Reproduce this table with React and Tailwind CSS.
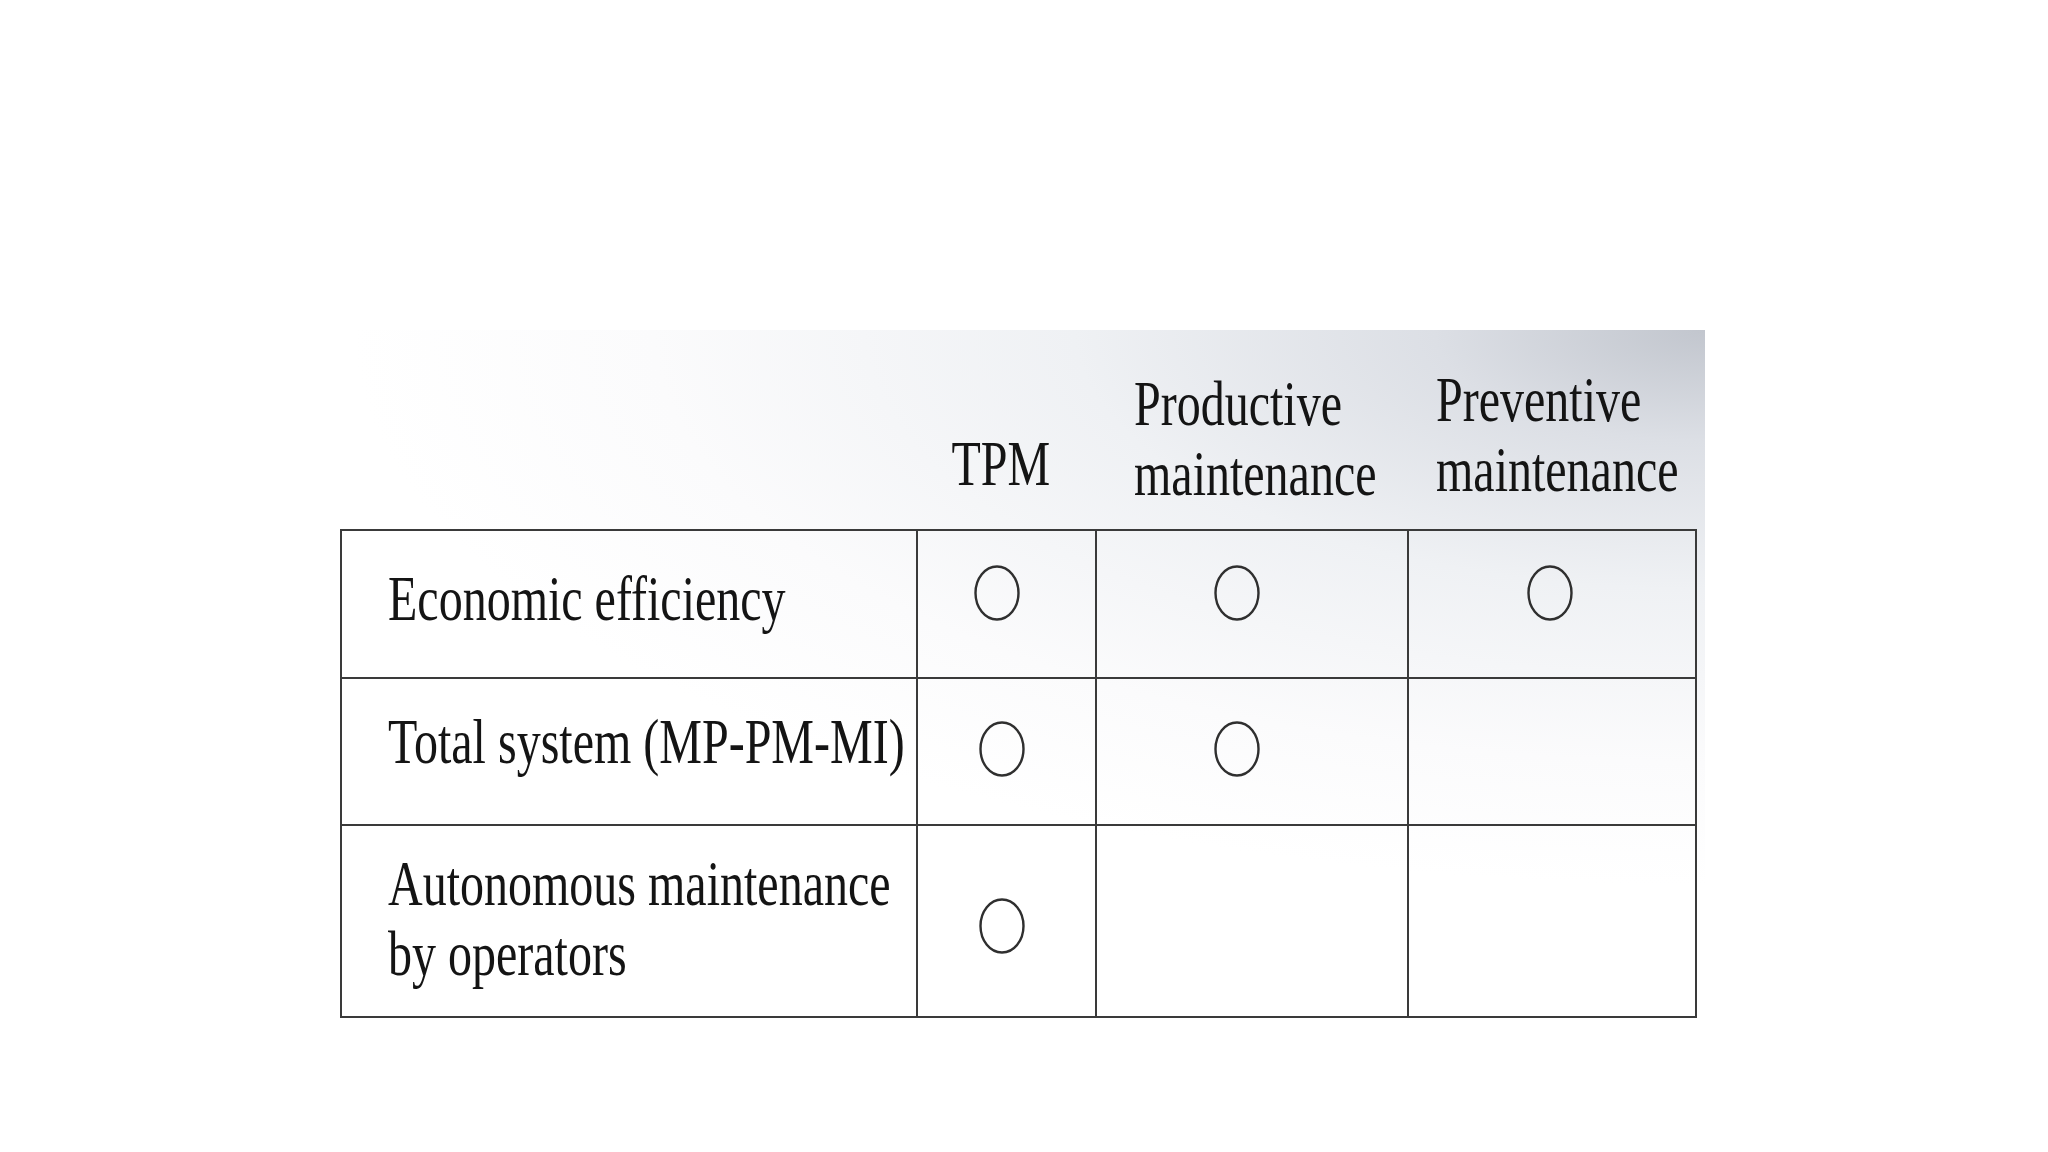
import React from 'react';

const serif = { fontFamily: '"Liberation Serif", "Times New Roman", serif' };

const Ring = () => (
  <svg width="48" height="58" viewBox="0 0 48 58">
    <ellipse cx="24" cy="29" rx="21.5" ry="26.5" fill="none" stroke="#2f2f2f" strokeWidth="2.4" />
  </svg>
);

const rows = [
  {
    label: ['Economic efficiency'],
    marks: [true, true, true],
    height: 'h-[148px]',
    textPad: 'pb-[10px]',
    ringPad: 'pb-[22px]',
    shift: ['pr-[20px]', 'pr-[30px]', 'pr-[4px]'],
  },
  {
    label: ['Total system (MP-PM-MI)'],
    marks: [true, true, false],
    height: 'h-[147px]',
    textPad: 'pb-[20px]',
    ringPad: 'pb-[6px]',
    shift: ['pr-[10px]', 'pr-[30px]', 'pr-[4px]'],
  },
  {
    label: ['Autonomous maintenance', 'by operators'],
    marks: [true, false, false],
    height: 'h-[192px]',
    textPad: 'pb-[4px]',
    ringPad: 'pt-[10px]',
    shift: ['pr-[10px]', 'pr-[30px]', 'pr-[4px]'],
  },
];

const App = () => {
  return (
    <div className="w-[2048px] h-[1152px] bg-white overflow-hidden text-[#141414]" style={serif}>
      <div className="pt-[330px] pl-[340px]">
        <div className="w-[1365px] h-[822px] bg-[radial-gradient(ellipse_110%_75%_at_100%_0%,#c2c6ce_0%,#dcdfe5_18%,#eff1f4_42%,#fbfbfc_70%,#ffffff_90%)]">
          {/* Header row */}
          <div className="grid grid-cols-[578px_179px_312px_288px] h-[199px] items-end text-[64px] leading-[70px]">
            <div />
            <div className="flex justify-center pb-[30px] pr-[14px]">
              <span className="inline-block scale-x-[0.75] whitespace-nowrap">TPM</span>
            </div>
            <div className="pb-[20px] pl-[37px]">
              <span className="inline-block scale-x-[0.75] origin-left whitespace-nowrap">
                Productive
                <br />
                maintenance
              </span>
            </div>
            <div className="pb-[24px] pl-[27px]">
              <span className="inline-block scale-x-[0.75] origin-left whitespace-nowrap">
                Preventive
                <br />
                maintenance
              </span>
            </div>
          </div>

          {/* Table body */}
          <div className="w-[1357px] border-l-[2.5px] border-t-[2.5px] border-[#3a3a3a] text-[64px] leading-[70px]">
            {rows.map((row, i) => (
              <div key={i} className={`grid grid-cols-[576px_179px_312px_288px] ${row.height}`}>
                <div className={`flex items-center pl-[46px] border-r-2 border-b-[2.5px] border-[#3a3a3a] ${row.textPad}`}>
                  <span className="inline-block scale-x-[0.75] origin-left whitespace-nowrap">
                    {row.label.map((line, j) => (
                      <React.Fragment key={j}>
                        {j > 0 && <br />}
                        {line}
                      </React.Fragment>
                    ))}
                  </span>
                </div>
                {row.marks.map((m, k) => (
                  <div
                    key={k}
                    className={`flex items-center justify-center border-r-2 border-b-[2.5px] border-[#3a3a3a] ${row.ringPad} ${row.shift[k]}`}
                  >
                    {m && <Ring />}
                  </div>
                ))}
              </div>
            ))}
          </div>
        </div>
      </div>
    </div>
  );
};

export default App;
